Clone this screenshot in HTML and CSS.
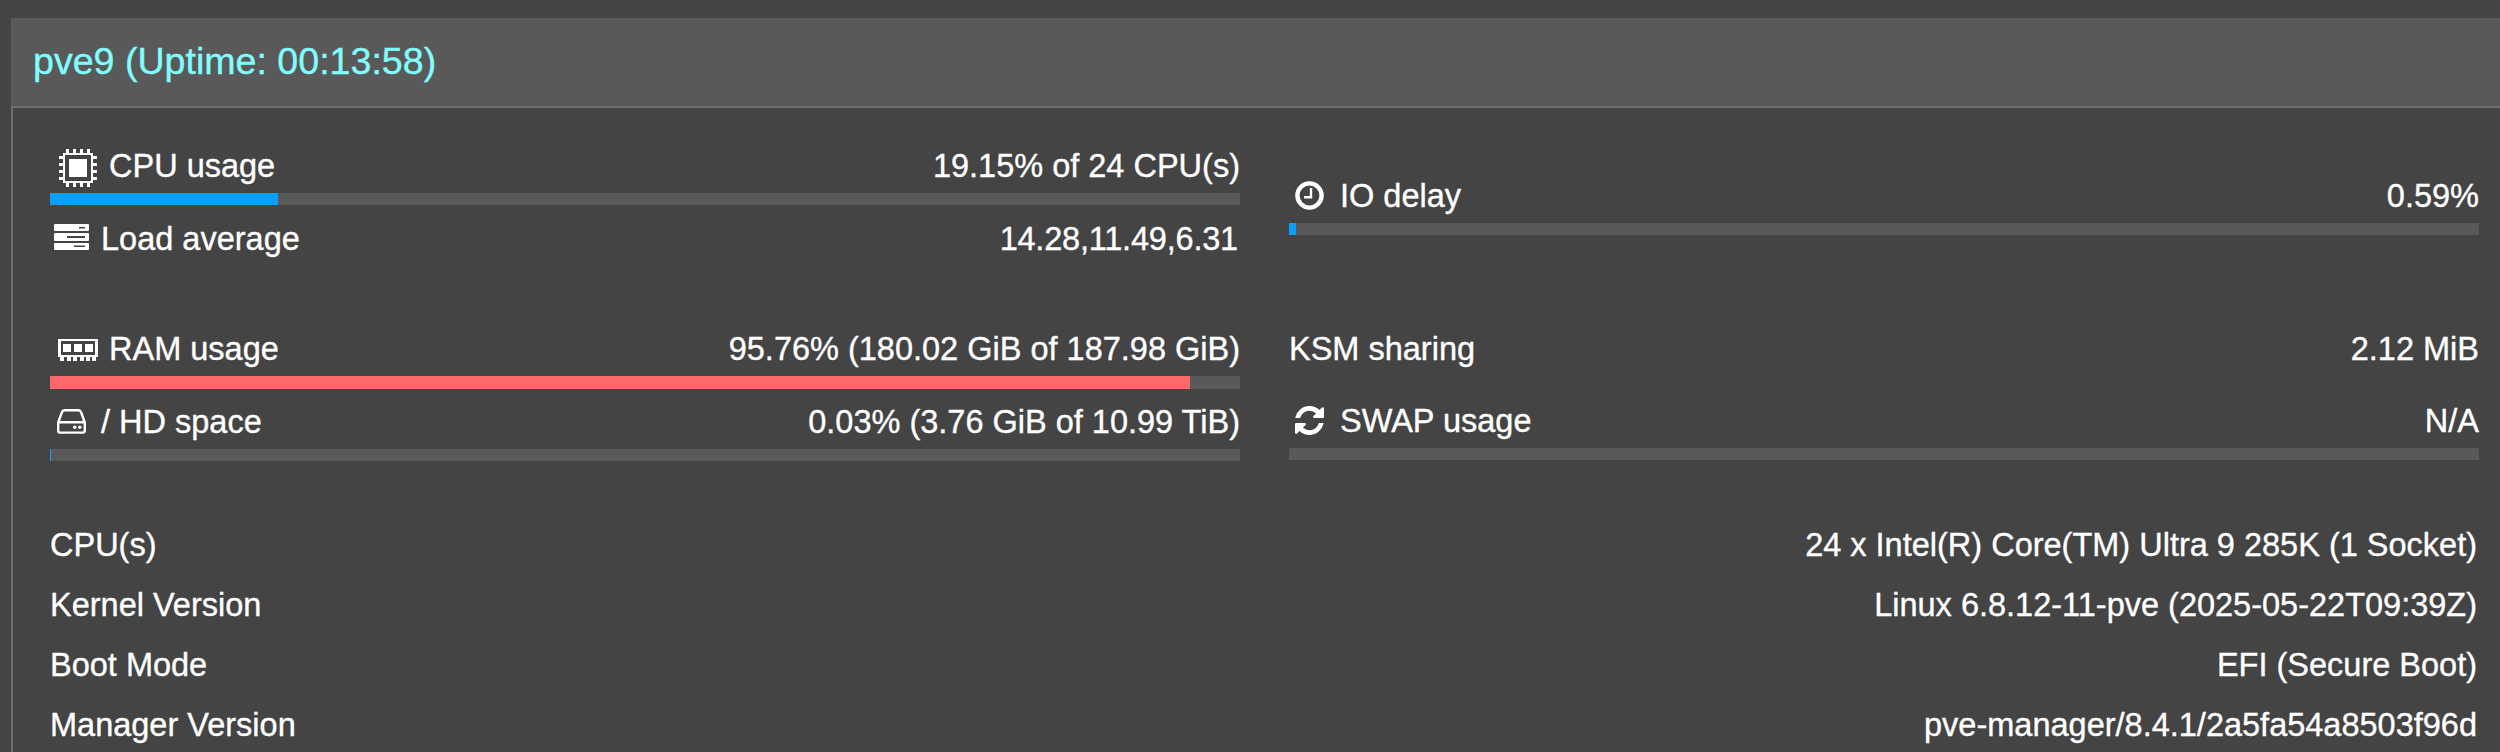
FILE: index.html
```html
<!DOCTYPE html>
<html lang="en">
<head>
<meta charset="utf-8">
<title>pve9</title>
<link rel="stylesheet" href="styles.css">
</head>
<body>
<section class="panel">
  <header class="panel-header"><h1 class="panel-title">pve9 (Uptime: 00:13:58)</h1></header>
  <div class="panel-body">
    <div class="stats">
      <div class="column">
        <div class="stat">
          <div class="line">
            <svg class="icon icon-cpu" viewBox="0 0 38 38" fill="#fff"><path fill-rule="evenodd" d="M4 4H34V34H4ZM6 6V32H32V6Z"/><path d="M10 10h18v18H10zM7 0h3v4H7zM14 0h3v4h-3zM21 0h3v4h-3zM28 0h3v4h-3zM7 34h3v4H7zM14 34h3v4h-3zM21 34h3v4h-3zM28 34h3v4h-3zM0 7h4v3H0zM0 14h4v3H0zM0 21h4v3H0zM0 28h4v3H0zM34 7h4v3h-4zM34 14h4v3h-4zM34 21h4v3h-4zM34 28h4v3h-4z"/></svg>
            <span class="label">CPU usage</span><span class="value">19.15% of 24 CPU(s)</span>
          </div>
          <div class="bar"><div class="fill" style="width:19.15%"></div></div>
        </div>
        <div class="stat stat-load">
          <div class="line">
            <svg class="icon icon-load" viewBox="0 0 35 26"><g fill="#fff"><rect width="35" height="7" rx="1"/><rect y="9" width="35" height="8" rx="1"/><rect y="19" width="35" height="7" rx="1"/></g><g fill="#444"><path d="M25 3h6v1.5h-6zM13 12h18v2H13zM20 21.5h11V23H20z"/></g></svg>
            <span class="label">Load average</span><span class="value value-load">14.28,11.49,6.31</span>
          </div>
        </div>
        <div class="stat stat-ram">
          <div class="line">
            <svg class="icon icon-ram" viewBox="0 0 40 22" fill="#fff"><path fill-rule="evenodd" d="M0 0H40V18H38V22H34V18H32V22H28V18H26V22H22V18H19V22H15V18H13V22H9V18H6V22H2V18H0ZM3 2V16H37V2Z"/><path d="M5 5h8v8H5zM16 5h8v8h-8zM27 5h8v8h-8z"/></svg>
            <span class="label">RAM usage</span><span class="value">95.76% (180.02 GiB of 187.98 GiB)</span>
          </div>
          <div class="bar bar-ram"><div class="fill fill-critical" style="width:95.76%"></div></div>
        </div>
        <div class="stat stat-disk">
          <div class="line">
            <svg class="icon icon-disk" viewBox="0 0 29 25"><path d="M1.2 13.5 5 3Q5.6 1.2 7.5 1.2H21.5Q23.4 1.2 24 3L27.8 13.5V21.5Q27.8 23.6 25.7 23.6H3.3Q1.2 23.6 1.2 21.5ZM1.5 13.3H27.5" fill="none" stroke="#fff" stroke-width="2.4"/><circle cx="17.8" cy="18.2" r="1.8" fill="#fff"/><circle cx="22.8" cy="18.2" r="1.8" fill="#fff"/></svg>
            <span class="label">/ HD space</span><span class="value">0.03% (3.76 GiB of 10.99 TiB)</span>
          </div>
          <div class="bar"><div class="fill" style="width:0.085%"></div></div>
        </div>
      </div>
      <div class="column">
        <div class="stat stat-io">
          <div class="line">
            <svg class="icon icon-clock" viewBox="0 0 29 29" fill="none" stroke="#fff"><circle cx="14.5" cy="14.5" r="12.1" stroke-width="4.4"/><path d="M16 7V16.2H9" stroke-width="2.4"/></svg>
            <span class="label">IO delay</span><span class="value">0.59%</span>
          </div>
          <div class="bar"><div class="fill" style="width:0.59%"></div></div>
        </div>
        <div class="stat stat-ksm">
          <div class="line"><span class="label">KSM sharing</span><span class="value">2.12 MiB</span></div>
        </div>
        <div class="stat stat-swap">
          <div class="line">
            <svg class="icon icon-swap" viewBox="0 0 1536 1536" fill="#fff"><path d="M1511 928q0 5-1 7-64 268-268 434.500T764 1536q-146 0-282.500-55T238 1324l-129 129q-19 19-45 19t-45-19-19-45V960q0-26 19-45t45-19h448q26 0 45 19t19 45-19 45l-137 137q71 66 161 102t187 36q134 0 250-65t186-179q11-17 53-117 8-23 30-23h192q13 0 22.500 9.500t9.500 22.500zm25-800v448q0 26-19 45t-45 19h-448q-26 0-45-19t-19-45 19-45l138-138Q969 256 768 256q-134 0-250 65T332 500q-11 17-53 117-8 23-30 23H50q-13 0-22.500-9.500T18 608v-7q65-268 270-434.500T768 0q146 0 284 55.500T1297 212l130-129q19-19 45-19t45 19 19 45z"/></svg>
            <span class="label">SWAP usage</span><span class="value">N/A</span>
          </div>
          <div class="bar"></div>
        </div>
      </div>
    </div>
    <dl class="info">
      <div class="row"><dt>CPU(s)</dt><dd>24 x Intel(R) Core(TM) Ultra 9 285K (1 Socket)</dd></div>
      <div class="row"><dt>Kernel Version</dt><dd>Linux 6.8.12-11-pve (2025-05-22T09:39Z)</dd></div>
      <div class="row"><dt>Boot Mode</dt><dd>EFI (Secure Boot)</dd></div>
      <div class="row"><dt>Manager Version</dt><dd>pve-manager/8.4.1/2a5fa54a8503f96d</dd></div>
    </dl>
  </div>
</section>
</body>
</html>
```
FILE: styles.css
```css
* { box-sizing: border-box; }
html { overflow: hidden; }
body {
  margin: 0;
  height: 752px;
  overflow: hidden;
  padding: 18px 0 0 11px;
  background: #444;
  color: #fff;
  font: 32.5px/40px "Liberation Sans", Arial, sans-serif;
  -webkit-text-stroke: 0.35px currentColor;
}
.panel-header {
  height: 90px;
  padding: 22px 22px 0;
  background: #595959;
  border-bottom: 2px solid #6e6e6e;
}
.panel-title {
  margin: 0;
  color: #80ffff;
  font-size: 37.6px;
  font-weight: 400;
  line-height: 42px;
}
.panel-body {
  height: 660px;
  border-left: 2px solid #6e6e6e;
  padding: 37px 21px 0 37px;
}
.stats { display: grid; grid-template-columns: 1190px 1190px; column-gap: 49px; }
.line { display: flex; height: 48px; padding-top: 1px; }
.label, .value { white-space: pre; }
.value { margin-left: auto; }
.value-load { margin-right: 2px; letter-spacing: -0.2px; }
.bar { height: 12px; background: #595959; }
.bar-ram { height: 13px; }
.fill { height: 100%; background: #0a9fff; }
.fill-critical { background: #ff6868; }
.stat-load { margin-top: 13px; }
.stat-ram { margin-top: 61px; }
.stat-ram .line { height: 49px; padding-top: 2px; }
.stat-disk { margin-top: 12px; }
.stat-io { margin-top: 30px; }
.stat-ksm { margin-top: 92px; }
.stat-ksm .line { padding-top: 2px; }
.stat-swap { margin-top: 25px; }
.icon { flex: none; }
.icon-cpu { width: 38px; height: 38px; margin: 3px 12px 0 9px; }
.icon-load { width: 35px; height: 26px; margin: 5px 12px 0 4px; }
.icon-ram { width: 40px; height: 22px; margin: 10px 11px 0 8px; }
.icon-disk { width: 29px; height: 25px; margin: 7px 15px 0 7px; }
.icon-clock { width: 29px; height: 29px; margin: 5px 16px 0 6px; }
.icon-swap { width: 29px; height: 29px; margin: 5px 16px 0 6px; }
.info { margin: 64px 0 0; }
.row { display: flex; justify-content: space-between; height: 60px; }
.row dd { margin: 0 2px 0 0; }
```
